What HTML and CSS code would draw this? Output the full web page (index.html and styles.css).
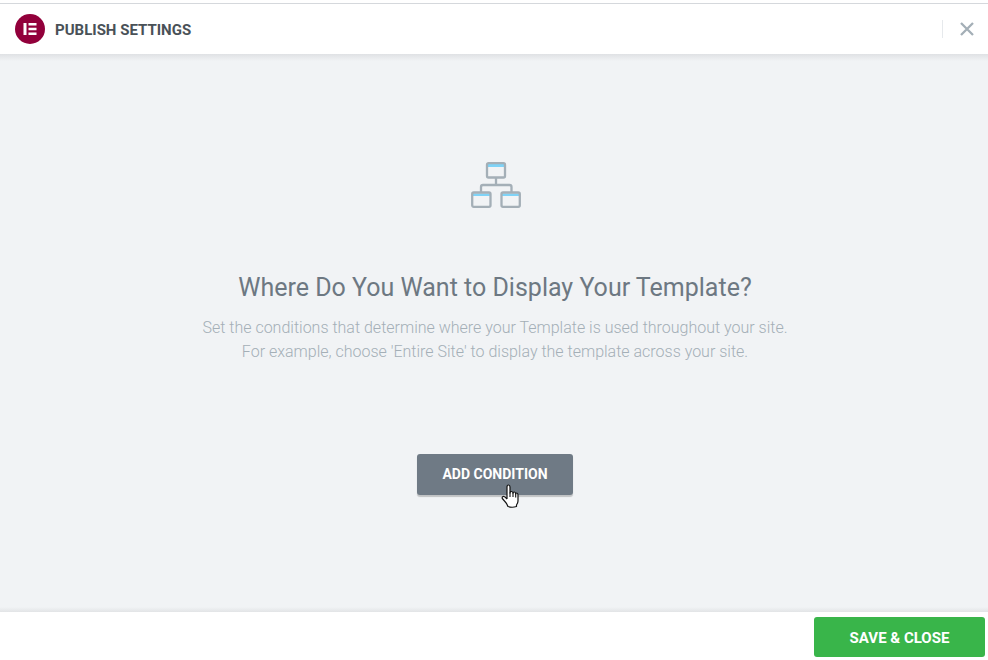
FILE: index.html
```html
<!DOCTYPE html>
<html lang="en">
<head>
  <meta charset="UTF-8" />
  <title>Publish Settings</title>
  <link rel="stylesheet" href="styles.css">
</head>
<body>
  <div class="modal">
    <header class="header">
      <svg class="logo" width="30" height="30" viewBox="0 0 30 30">
        <circle cx="15" cy="15" r="15" fill="#92003b" />
        <path d="M8.500 9h3v12h-3zM13.500 9h8v2.600h-8zM13.500 13.700h8v2.600h-8zM13.500 18.400h8V21h-8z" fill="#fff" />
      </svg>
      <h1 class="title">PUBLISH SETTINGS</h1>
      <button class="close" aria-label="Close">
        <svg width="14" height="14" viewBox="0 0 14 14">
          <path d="M1 1l12 12M13 1L1 13" stroke="#a4afb7" stroke-width="2.300" />
        </svg>
      </button>
    </header>

    <main class="content">
      <svg class="icon" width="50" height="46" viewBox="0 0 50 46" fill="none">
        <path d="M16 2h18v3H16zM2 31.500h17v2.500H2zM31 31.500h17v2.500H31z" fill="#7fd3f7" />
        <g stroke="#a4afb7" stroke-width="2.300">
          <rect x="16" y="1.200" width="18" height="14.300" rx="1.500" />
          <rect x="1.200" y="30.500" width="18.300" height="14.300" rx="1.500" />
          <rect x="30.500" y="30.500" width="18.300" height="14.300" rx="1.500" />
          <path d="M25 15.500V23M10 30.500V25q0-2 2-2h26.500q2 0 2 2v5.500" />
        </g>
      </svg>
      <h2 class="heading">Where Do You Want to Display Your Template?</h2>
      <p class="text">Set the conditions that determine where your Template is used throughout your site.<br />For example, choose 'Entire Site' to display the template across your site.</p>
      <div class="action">
        <button class="add">ADD CONDITION</button>
        <svg class="cursor" width="18" height="24" viewBox="0 0 18 24">
          <path d="M6 15V3q0-2 1.500-2T9 3v6q0-1.500 1.500-1.500T12 9.500q0-1.500 1.300-1.500t1.400 2q0-1 1.100-1T17 11v6q0 2-1.500 4v1.500Q11 24 7 22.500 6 19.500 3.500 17L1.300 14.500Q.8 13 2 12.500q1.500-.4 4 2.500" fill="#fff" stroke="#111" stroke-width="1.200" stroke-linejoin="round" />
          <path d="M9 8.500V13M12 9.500V13M14.700 10v3.500" stroke="#111" stroke-width="1.100" />
        </svg>
      </div>
    </main>

    <footer class="footer">
      <button class="save">SAVE &amp; CLOSE</button>
    </footer>
  </div>
</body>
</html>
```
FILE: styles.css
```css
* {
  box-sizing: border-box;
}

body {
  margin: 0;
  font-family: Roboto, sans-serif;
  background-color: #fff;
  overflow: hidden;
}

button {
  border: none;
  padding: 0;
  font-family: inherit;
  font-weight: 700;
  cursor: pointer;
}

.modal {
  display: flex;
  flex-direction: column;
  height: 660px;
  padding-top: 3px;
}

.header {
  display: flex;
  align-items: center;
  height: 51px;
  padding-left: 15px;
  border-top: 1px solid #d5d8dc;
}

.title {
  flex: 1;
  margin: 1px 0 0 10px;
  font-size: 15px;
  font-weight: 700;
  color: #495157;
}

.close {
  display: flex;
  align-items: center;
  justify-content: center;
  width: 46px;
  height: 18px;
  padding-left: 2px;
  background: none;
  border-left: 1px solid #e6e9ec;
}

.content {
  flex: 1;
  display: flex;
  flex-direction: column;
  align-items: center;
  padding: 108px 0 0 2px;
  background-color: #f1f3f5;
  background-image: linear-gradient(#dfe1e4, #f1f3f5), linear-gradient(#f1f3f5, #e2e4e6);
  background-position: top, bottom;
  background-repeat: no-repeat;
  background-size: 100% 7px, 100% 5px;
}

.icon {
  margin-left: 2px;
}

.heading {
  margin: 65px 0 0;
  font-size: 25px;
  font-weight: 400;
  line-height: 30px;
  color: #6d7882;
}

.text {
  margin: 13px 0 0;
  font-size: 16px;
  font-weight: 300;
  line-height: 24px;
  text-align: center;
  color: #a4afb7;
}

.action {
  position: relative;
  margin-top: 90px;
}

.add {
  display: block;
  width: 156px;
  height: 41px;
  padding-bottom: 1px;
  border-radius: 3px;
  background-color: #6f7a85;
  box-shadow: 0 2px 1px rgba(0, 0, 0, 0.2);
  font-size: 14px;
  color: #fff;
}

/* pointer resting on the button */
.cursor {
  position: absolute;
  left: 84px;
  top: 30px;
}

.footer {
  display: flex;
  justify-content: flex-end;
  height: 48px;
  padding: 5px 3px 3px;
}

.save {
  width: 171px;
  height: 40px;
  padding-top: 1px;
  border-radius: 3px;
  background-color: #39b54a;
  font-size: 15px;
  color: #fff;
}
```
